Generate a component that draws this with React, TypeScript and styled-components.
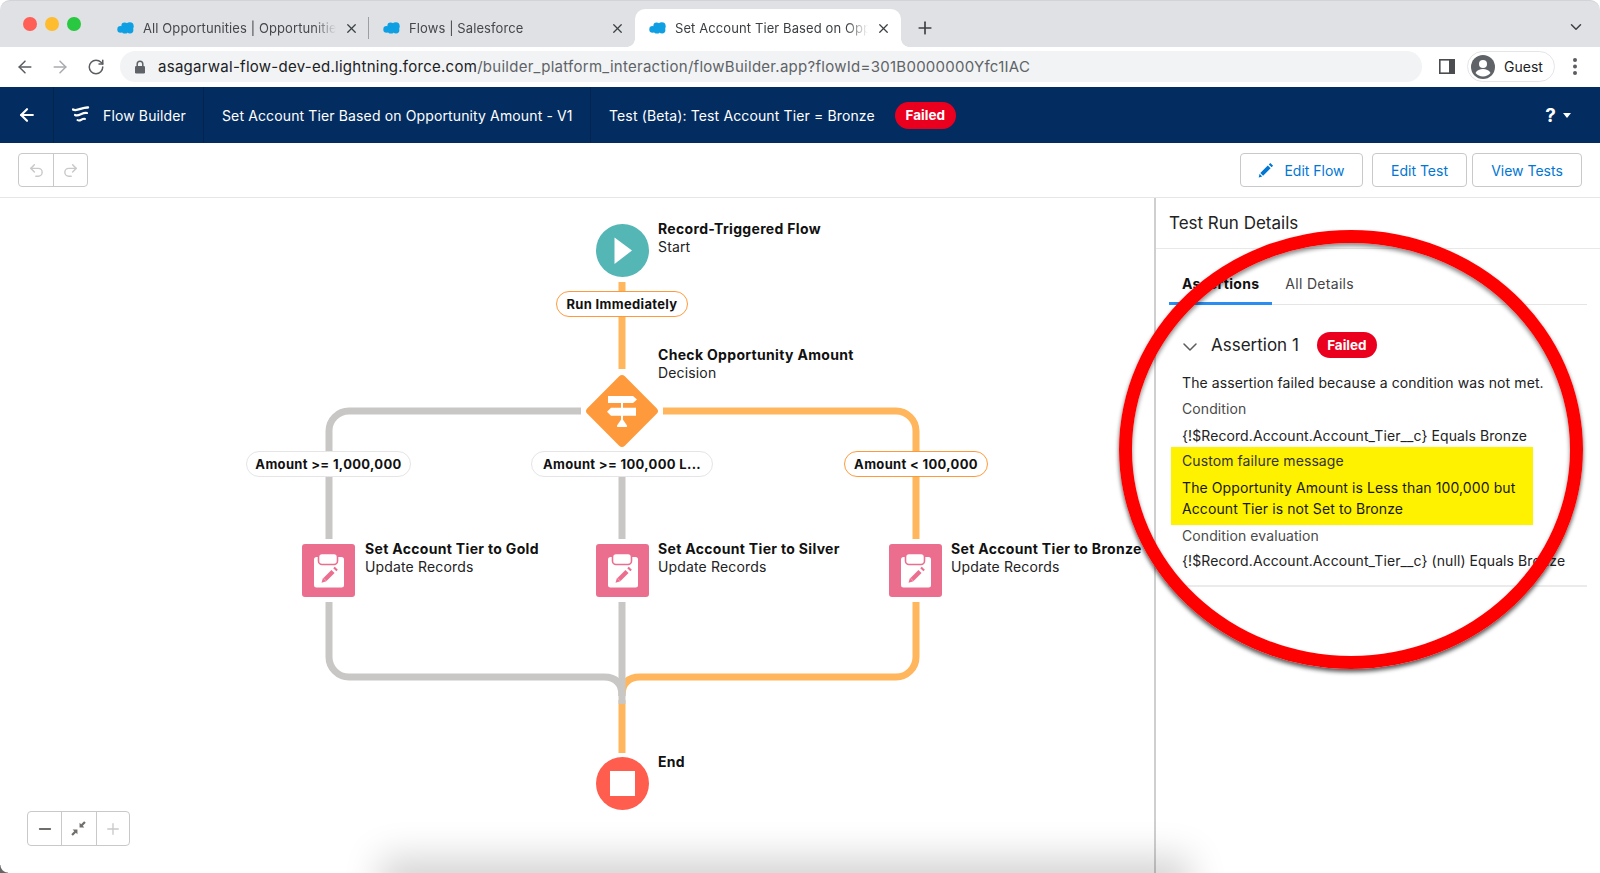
import React from "react";
import styled, { createGlobalStyle } from "styled-components";
import { ArrowLeft, ArrowRight, RotateCw, X, Plus, ChevronDown, Undo2, Redo2, Minus } from "lucide-react";

const CANVAS_TOP = 198;
const ORANGE = "#FFB65C";
const GRAY = "#C9C7C5";
const FONT = `Inter, "Liberation Sans", sans-serif`;

const Global = createGlobalStyle`
  html, body { margin: 0; padding: 0; background: #fff; }
  body { font-family: ${FONT}; color: #181818; overflow: hidden; }
  * { box-sizing: border-box; }
`;

const Window = styled.div`
  position: relative;
  width: 1600px;
  height: 873px;
  overflow: hidden;
  display: flex;
  flex-direction: column;
  background: #fff;
`;

/* ---------- browser tab strip ---------- */
const TabStrip = styled.div`
  height: 47px;
  flex: none;
  display: flex;
  align-items: flex-end;
  padding-left: 23px;
  background: #dfe1e5;
  border-radius: 10px 10px 0 0;
  border-top: 1px solid #d2d3d6;
`;
const Lights = styled.div`
  width: 80px;
  align-self: flex-start;
  display: flex;
  gap: 8.5px;
  padding-top: 16px;
`;
const Light = styled.span<{ $c: string }>`
  width: 13.5px;
  height: 14px;
  border-radius: 50%;
  background: ${(p) => p.$c};
`;
const Tab = styled.div<{ $active?: boolean; $sep?: boolean }>`
  position: relative;
  width: 266px;
  height: 38px;
  display: flex;
  align-items: center;
  padding: 0 0 0 14px;
  gap: 8px;
  color: ${(p) => (p.$active ? "#3c4043" : "#45474a")};
  background: ${(p) => (p.$active ? "#fff" : "transparent")};
  border-radius: 10px 10px 0 0;
  &::before {
    content: "";
    display: ${(p) => (p.$active ? "block" : "none")};
    position: absolute;
    left: -8px;
    bottom: 0;
    width: 8px;
    height: 8px;
    background: radial-gradient(circle at 0 0, #dfe1e5 7.5px, #fff 8px);
  }
  &::after {
    content: "";
    display: ${(p) => (p.$sep || p.$active ? "block" : "none")};
    position: absolute;
    ${(p) =>
      p.$active
        ? `right: -8px; bottom: 0; width: 8px; height: 8px;
           background: radial-gradient(circle at 100% 0, #dfe1e5 7.5px, #fff 8px);`
        : `right: 0; top: 8px; height: 22px; width: 1px; background: #9c9ea1;`}
  }
`;
const TabTitle = styled.span`
  width: 193px;
  margin-left: 1px;
  font-size: 13px;
  letter-spacing: 0.1px;
  white-space: nowrap;
  line-height: 20px;
  mask-image: linear-gradient(to right, #000 calc(100% - 22px), transparent);
`;
const TabClose = styled(X)`
  width: 15px;
  height: 15px;
  stroke-width: 2;
  color: #3c4043;
`;
const NewTab = styled(Plus)`
  width: 20px;
  height: 20px;
  margin: 0 0 9px 14px;
  color: #3c4043;
  stroke-width: 2;
`;
const StripChevron = styled(ChevronDown)`
  margin: 0 15px 11px auto;
  width: 18px;
  height: 18px;
  color: #3c4043;
`;

/* ---------- browser address bar ---------- */
const NavBar = styled.div`
  height: 40px;
  flex: none;
  display: flex;
  align-items: center;
  background: #fff;
  padding: 4px 0 5px 14px;
`;
const NavIcon = styled.span<{ $muted?: boolean }>`
  width: 21px;
  margin-right: 14.5px;
  display: flex;
  justify-content: center;
  color: ${(p) => (p.$muted ? "#a9abaf" : "#5a5d61")};
`;
const Omnibox = styled.div`
  width: 1302px;
  height: 31px;
  margin-left: -0.5px;
  border-radius: 16px;
  background: #f1f3f4;
  display: flex;
  align-items: center;
  padding-left: 14px;
  font-size: 15px;
  letter-spacing: 0.27px;
  color: #202124;
  white-space: nowrap;
`;
const LockIcon = styled.svg`
  width: 12px;
  height: 14px;
  margin-right: 12px;
`;
const Path = styled.span`
  color: #5f6368;
`;
const SideBtn = styled.svg`
  width: 16px;
  height: 15px;
  margin-left: 17px;
`;
const GuestPill = styled.div`
  width: 88px;
  height: 31px;
  margin-left: 12px;
  border: 1px solid #e4e5e8;
  border-radius: 16px;
  display: flex;
  align-items: center;
  padding-left: 3px;
  gap: 9px;
  font-size: 14px;
  color: #202124;
`;
const Kebab = styled.svg`
  width: 4px;
  height: 17px;
  margin-left: 18px;
`;

/* ---------- flow builder header ---------- */
const AppHeader = styled.header`
  height: 56px;
  flex: none;
  display: flex;
  align-items: stretch;
  background: #032d60;
  color: #fff;
  font-size: 14px;
  letter-spacing: 0.13px;
`;
const HeaderCell = styled.div<{ $w?: number; $pad?: number }>`
  ${(p) => (p.$w ? `width: ${p.$w}px;` : "")}
  padding: 0 ${(p) => p.$pad ?? 0}px;
  display: flex;
  align-items: center;
  border-right: 1px solid #02244d;
  white-space: nowrap;
`;
const TestCell = styled.div`
  display: flex;
  align-items: center;
  padding-left: 18px;
  gap: 20px;
`;
const BackArrow = styled(ArrowLeft)`
  width: 20px;
  height: 20px;
  margin-left: 17px;
  stroke-width: 2.6;
`;
const FlowMark = styled.svg`
  width: 18px;
  height: 18px;
  margin: 0 13px 0 18px;
`;
const Badge = styled.span<{ $big?: boolean }>`
  height: ${(p) => (p.$big ? 27 : 26)}px;
  width: ${(p) => (p.$big ? 61 : 60)}px;
  border-radius: 14px;
  background: #ea001e;
  color: #fff;
  font-size: 13.5px;
  font-weight: 700;
  letter-spacing: 0;
  display: flex;
  align-items: center;
  justify-content: center;
`;
const HelpMenu = styled.div`
  margin-left: auto;
  margin-right: 29px;
  display: flex;
  align-items: center;
  gap: 7px;
  font-size: 19px;
  font-weight: 700;
`;
const Caret = styled.span`
  width: 0;
  height: 0;
  border-left: 4px solid transparent;
  border-right: 4px solid transparent;
  border-top: 5px solid #fff;
`;

/* ---------- flow builder toolbar ---------- */
const ActionBar = styled.div`
  height: 55px;
  flex: none;
  display: flex;
  justify-content: space-between;
  padding: 10px 18px 0;
  border-bottom: 1px solid #e6e6e6;
`;
const BtnGroup = styled.div`
  display: flex;
  height: 34px;
  border: 1px solid #c9c9c9;
  border-radius: 4px;
`;
const GroupBtn = styled.span<{ $w: number; $fg?: string }>`
  width: ${(p) => p.$w}px;
  display: flex;
  align-items: center;
  justify-content: center;
  color: ${(p) => p.$fg ?? "#c9c9c9"};
  & + & {
    border-left: 1px solid #c9c9c9;
  }
`;
const Actions = styled.div`
  display: flex;
`;
const ActionBtn = styled.span<{ $w: number; $mr?: number }>`
  width: ${(p) => p.$w}px;
  height: 34px;
  margin-right: ${(p) => p.$mr ?? 0}px;
  display: flex;
  align-items: center;
  justify-content: center;
  gap: 10px;
  border: 1px solid #c9c9c9;
  border-radius: 4px;
  color: #0176d3;
  font-size: 14px;
`;

/* ---------- workspace ---------- */
const Workspace = styled.div`
  flex: 1;
  min-height: 0;
  display: flex;
`;
const Canvas = styled.main`
  position: relative;
  flex: 1;
  min-width: 0;
`;
const Wires = styled.svg`
  position: absolute;
  inset: 0;
  width: 1155px;
  height: 675px;
`;
const Wire = styled.path<{ $c: string }>`
  fill: none;
  stroke: ${(p) => p.$c};
  stroke-width: 7;
`;
const NodeIcon = styled.div<{ $x: number; $y: number; $s?: number }>`
  position: absolute;
  left: ${(p) => p.$x}px;
  top: ${(p) => p.$y - CANVAS_TOP}px;
  width: ${(p) => p.$s ?? 53}px;
  height: ${(p) => p.$s ?? 53}px;
  svg {
    display: block;
  }
`;
const NodeLabel = styled.div<{ $x: number; $y: number }>`
  position: absolute;
  left: ${(p) => p.$x}px;
  top: ${(p) => p.$y - CANVAS_TOP}px;
  font-size: 14px;
  line-height: 18px;
  letter-spacing: 0.15px;
  white-space: nowrap;
  color: #222;
`;
const NodeName = styled.div`
  font-weight: 700;
  letter-spacing: 0.32px;
  color: #111;
`;
const Pill = styled.div<{ $x: number; $y: number; $w: number; $hot?: boolean }>`
  position: absolute;
  left: ${(p) => p.$x}px;
  top: ${(p) => p.$y - CANVAS_TOP}px;
  width: ${(p) => p.$w}px;
  height: 26px;
  background: #fff;
  border: 1px solid ${(p) => (p.$hot ? "#FF9A3C" : "#e5e5e5")};
  border-radius: 13px;
  display: flex;
  align-items: center;
  justify-content: center;
  font-size: 13px;
  font-weight: 700;
  letter-spacing: 0.33px;
  color: #111;
  white-space: nowrap;
`;
const ZoomBar = styled(BtnGroup)`
  position: absolute;
  left: 27px;
  bottom: 27px;
  height: 35px;
  width: 103px;
`;

/* ---------- right panel ---------- */
const Panel = styled.aside`
  width: 446px;
  flex: none;
  border-left: 2px solid #cfcfcf;
`;
const PanelHead = styled.div`
  height: 51px;
  padding: 15px 0 0 13px;
  border-bottom: 1px solid #e8e8e8;
  font-size: 17px;
  line-height: 20px;
  color: #222;
`;
const PanelTabs = styled.div`
  margin: 20px 13px 0 13px;
  height: 36px;
  display: flex;
  border-bottom: 1px solid #e5e5e5;
`;
const PanelTab = styled.div<{ $on?: boolean }>`
  height: 36px;
  padding: 0 13px;
  line-height: 30px;
  font-size: 14px;
  letter-spacing: 0.3px;
  font-weight: ${(p) => (p.$on ? 700 : 400)};
  color: ${(p) => (p.$on ? "#111" : "#444")};
  border-bottom: 3px solid ${(p) => (p.$on ? "#2b8df0" : "transparent")};
`;
const Section = styled.section`
  margin: 27px 13px 0 12px;
  padding-bottom: 10px;
  border-bottom: 2px solid #ebebeb;
`;
const SectionHead = styled.div`
  height: 26px;
  display: flex;
  align-items: center;
  padding-left: 12px;
`;
const Chevron = styled(ChevronDown)`
  width: 24px;
  height: 24px;
  stroke-width: 1.5;
  color: #5c5c5c;
  margin: 4px 0 0 -2px;
`;
const SectionTitle = styled.span`
  margin: 0 18px 0 9px;
  font-size: 17px;
  color: #222;
`;
const Line = styled.div<{ $muted?: boolean; $h?: number }>`
  padding-left: 14px;
  font-size: 14px;
  letter-spacing: 0.09px;
  line-height: ${(p) => p.$h ?? 26}px;
  white-space: nowrap;
  color: ${(p) => (p.$muted ? "#4a4a4a" : "#222")};
`;
const Body = styled.div`
  margin-top: 12px;
`;
const Highlight = styled.div`
  width: 362px;
  margin: -2px 0 0 3px;
  padding: 1px 0 4px;
  background: #fff200;
`;
const HighlightLine = styled(Line)`
  padding-left: 11px;
  color: #333;
`;
const Message = styled.div`
  padding: 2.5px 11px;
  font-size: 14px;
  letter-spacing: 0.1px;
  line-height: 21px;
  color: #181818;
`;

/* ---------- overlays ---------- */
const Ring = styled.div`
  position: absolute;
  left: 1119px;
  top: 230px;
  width: 464px;
  height: 439px;
  border: 13px solid #fe0000;
  border-radius: 50%;
  box-shadow: 0 3px 4px rgba(0, 0, 0, 0.65), inset 0 3px 4px rgba(0, 0, 0, 0.45);
  pointer-events: none;
`;
const BottomShade = styled.div`
  position: absolute;
  left: 400px;
  bottom: -34px;
  width: 770px;
  height: 30px;
  box-shadow: 0 0 36px 20px rgba(0, 0, 0, 0.17);
  pointer-events: none;
`;
const Corner = styled.div`
  position: absolute;
  left: 0;
  bottom: 0;
  width: 8px;
  height: 8px;
  background: radial-gradient(circle at 100% 0, transparent 7px, #666 8px);
`;

/* ---------- drawings ---------- */
const Cloud = () => (
  <svg width="17" height="12" viewBox="0 0 17 12" fill="#0F9FE3">
    <circle cx="3.6" cy="7.4" r="3.3" />
    <circle cx="7.6" cy="3.6" r="3.2" />
    <circle cx="12.8" cy="4.2" r="3.9" />
    <circle cx="13" cy="8" r="3.4" />
    <circle cx="8" cy="8.2" r="3.4" />
  </svg>
);
const FlowLogo = () => (
  <FlowMark viewBox="0 0 18 18" fill="none" stroke="#fff" strokeLinecap="round">
    <path d="M1 3.5C5 6 10 1 16 1.5" strokeWidth="2.4" />
    <path d="M3 9C7 11 10 6 15 7" strokeWidth="2.2" />
    <path d="M5.5 14C8 16 10 12 13 13" strokeWidth="2" />
  </FlowMark>
);
const Clipboard = () => (
  <svg width="53" height="53" viewBox="0 0 53 53">
    <rect width="53" height="53" rx="3" fill="#EC6E8F" />
    <rect x="12" y="13" width="30" height="30.5" rx="2.5" fill="#fff" />
    <rect x="16.5" y="9.5" width="19" height="11" rx="3.5" fill="#fff" stroke="#EC6E8F" strokeWidth="1.6" />
    <path d="M23 35.5L31 27.5M32.8 25.7L34.3 24.2" stroke="#EC6E8F" strokeWidth="4.4" fill="none" />
    <path d="M19.5 38.8l1.5-5 3.5 3.5z" fill="#EC6E8F" />
  </svg>
);
const Decision = () => (
  <svg width="74" height="74" viewBox="0 0 74 74">
    <rect x="10.5" y="10.5" width="53" height="53" rx="4" fill="#FF9A3C" transform="rotate(45 37 37)" />
    <path
      d="M23 22H48L52 25.5L48 29H38V33.7H51V41.7H38V45.8L42 51.5Q42.5 53 41 53H33Q31.5 53 32 51.5L36 45.8V41.7H26L22 37.7L26 33.7H36V29H23Z"
      fill="#fff"
    />
  </svg>
);
const PencilGlyph = () => (
  <svg width="16" height="16" viewBox="0 0 16 16" fill="#0176d3">
    <path d="M12.3.9l2.8 2.8-1.5 1.5-2.8-2.8zM9.8 3.4l2.8 2.8-7.5 7.5-2.8-2.8zM1.600 11.8l2.6 2.6-3.5 1z" />
  </svg>
);
const Compress = () => (
  <svg width="17" height="17" viewBox="0 0 16 16" fill="#706e6b">
    <path d="M9 7V2.5l1.5 1.5L13.3 1.2l1.5 1.5L12 5.5 13.5 7zM7 9v4.5L5.5 12l-2.8 2.8-1.5-1.5L4 10.5 2.5 9z" />
  </svg>
);

const updates = [
  { x: 302, lx: 365, name: "Set Account Tier to Gold" },
  { x: 595.5, lx: 658, name: "Set Account Tier to Silver" },
  { x: 889, lx: 951, name: "Set Account Tier to Bronze" },
];

export default function App() {
  return (
    <Window>
      <Global />
      <TabStrip>
        <Lights>
          <Light $c="#FF5F57" />
          <Light $c="#FEBC2E" />
          <Light $c="#28C840" />
        </Lights>
        <Tab $sep>
          <Cloud />
          <TabTitle>All Opportunities | Opportunitie</TabTitle>
          <TabClose />
        </Tab>
        <Tab>
          <Cloud />
          <TabTitle>Flows | Salesforce</TabTitle>
          <TabClose />
        </Tab>
        <Tab $active>
          <Cloud />
          <TabTitle>Set Account Tier Based on Opp</TabTitle>
          <TabClose />
        </Tab>
        <NewTab />
        <StripChevron />
      </TabStrip>

      <NavBar>
        <NavIcon>
          <ArrowLeft size={20} strokeWidth={1.8} />
        </NavIcon>
        <NavIcon $muted>
          <ArrowRight size={20} strokeWidth={1.8} />
        </NavIcon>
        <NavIcon>
          <RotateCw size={18} strokeWidth={2} />
        </NavIcon>
        <Omnibox>
          <LockIcon viewBox="0 0 12 14" fill="#5f6368">
            <rect x="1" y="6" width="10" height="7.5" rx="1.2" />
            <path d="M3.2 6V4a2.8 2.8 0 015.6 0v2" fill="none" stroke="#5f6368" strokeWidth="1.5" />
          </LockIcon>
          <span>
            asagarwal-flow-dev-ed.lightning.force.com
            <Path>/builder_platform_interaction/flowBuilder.app?flowId=301B0000000Yfc1IAC</Path>
          </span>
        </Omnibox>
        <SideBtn viewBox="0 0 16 15">
          <rect x="0.8" y="0.8" width="14.4" height="13.4" fill="#fff" stroke="#4a4c50" strokeWidth="1.6" />
          <rect x="10" y="1" width="5" height="13" fill="#4a4c50" />
        </SideBtn>
        <GuestPill>
          <svg width="24" height="24" viewBox="0 0 24 24">
            <circle cx="12" cy="12" r="12" fill="#5f6368" />
            <circle cx="12" cy="9" r="4" fill="#fff" />
            <path d="M4.5 18c1.5-3 4.5-4 7.5-4s6 1 7.5 4a9.8 9.8 0 01-15 0z" fill="#fff" />
          </svg>
          Guest
        </GuestPill>
        <Kebab viewBox="0 0 4 17" fill="#5a5d61">
          <circle cx="2" cy="2" r="2" />
          <circle cx="2" cy="8.5" r="2" />
          <circle cx="2" cy="15" r="2" />
        </Kebab>
      </NavBar>

      <AppHeader>
        <HeaderCell $w={54}>
          <BackArrow />
        </HeaderCell>
        <HeaderCell $w={150}>
          <FlowLogo />
          Flow Builder
        </HeaderCell>
        <HeaderCell $w={387} $pad={18}>
          Set Account Tier Based on Opportunity Amount - V1
        </HeaderCell>
        <TestCell>
          Test (Beta): Test Account Tier = Bronze
          <Badge $big>Failed</Badge>
        </TestCell>
        <HelpMenu>
          ?
          <Caret />
        </HelpMenu>
      </AppHeader>

      <ActionBar>
        <BtnGroup>
          <GroupBtn $w={34}>
            <Undo2 size={17} strokeWidth={2} />
          </GroupBtn>
          <GroupBtn $w={34}>
            <Redo2 size={17} strokeWidth={2} />
          </GroupBtn>
        </BtnGroup>
        <Actions>
          <ActionBtn $w={123} $mr={9}>
            <PencilGlyph />
            Edit Flow
          </ActionBtn>
          <ActionBtn $w={95} $mr={5}>
            Edit Test
          </ActionBtn>
          <ActionBtn $w={110}>View Tests</ActionBtn>
        </Actions>
      </ActionBar>

      <Workspace>
        <Canvas>
          <Wires viewBox={`0 ${CANVAS_TOP} 1155 675`}>
            <Wire $c={ORANGE} d="M622 282V369" />
            <Wire $c={ORANGE} d="M663 411H896A20 20 0 0 1 916 431V539M916 602V657A20 20 0 0 1 896 677H640Q622 677 622 696" />
            <Wire $c={ORANGE} d="M622 700V753" />
            <Wire $c={GRAY} d="M581 411H349A20 20 0 0 0 329 431V539M329 602V657A20 20 0 0 0 349 677H604Q622 677 622 696" />
            <Wire $c={GRAY} d="M622 477V539M622 602V704" />
          </Wires>

          <NodeIcon $x={595.5} $y={224}>
            <svg width="53" height="53" viewBox="0 0 53 53">
              <circle cx="26.5" cy="26.5" r="26.5" fill="#54B6B5" />
              <path d="M18.5 13.5L36 26.5 18.5 40z" fill="#fff" />
            </svg>
          </NodeIcon>
          <NodeLabel $x={658} $y={220}>
            <NodeName>Record-Triggered Flow</NodeName>
            Start
          </NodeLabel>
          <Pill $hot $x={556} $y={291} $w={132}>
            Run Immediately
          </Pill>

          <NodeIcon $x={585} $y={374} $s={74}>
            <Decision />
          </NodeIcon>
          <NodeLabel $x={658} $y={346}>
            <NodeName>Check Opportunity Amount</NodeName>
            Decision
          </NodeLabel>

          <Pill $x={246} $y={451} $w={165}>
            Amount &gt;= 1,000,000
          </Pill>
          <Pill $x={531} $y={451} $w={182}>
            Amount &gt;= 100,000 L...
          </Pill>
          <Pill $hot $x={844} $y={451} $w={144}>
            Amount &lt; 100,000
          </Pill>

          {updates.map((u) => (
            <React.Fragment key={u.name}>
              <NodeIcon $x={u.x} $y={544}>
                <Clipboard />
              </NodeIcon>
              <NodeLabel $x={u.lx} $y={540}>
                <NodeName>{u.name}</NodeName>
                Update Records
              </NodeLabel>
            </React.Fragment>
          ))}

          <NodeIcon $x={595.5} $y={757}>
            <svg width="53" height="53" viewBox="0 0 53 53">
              <circle cx="26.5" cy="26.5" r="26.5" fill="#FF5D4D" />
              <rect x="14" y="14" width="25" height="25" fill="#fff" />
            </svg>
          </NodeIcon>
          <NodeLabel $x={658} $y={753}>
            <NodeName>End</NodeName>
          </NodeLabel>

          <ZoomBar>
            <GroupBtn $w={34} $fg="#706e6b">
              <Minus size={18} strokeWidth={2.4} />
            </GroupBtn>
            <GroupBtn $w={35} $fg="#706e6b">
              <Compress />
            </GroupBtn>
            <GroupBtn $w={34}>
              <Plus size={18} strokeWidth={1.8} />
            </GroupBtn>
          </ZoomBar>
        </Canvas>

        <Panel>
          <PanelHead>Test Run Details</PanelHead>
          <PanelTabs>
            <PanelTab $on>Assertions</PanelTab>
            <PanelTab>All Details</PanelTab>
          </PanelTabs>
          <Section>
            <SectionHead>
              <Chevron />
              <SectionTitle>Assertion 1</SectionTitle>
              <Badge>Failed</Badge>
            </SectionHead>
            <Body>
              <Line>The assertion failed because a condition was not met.</Line>
              <Line $muted>Condition</Line>
              <Line $h={27}>{"{!$Record.Account.Account_Tier__c} Equals Bronze"}</Line>
              <Highlight>
                <HighlightLine>Custom failure message</HighlightLine>
                <Message>
                  The Opportunity Amount is Less than 100,000 but
                  <br />
                  Account Tier is not Set to Bronze
                </Message>
              </Highlight>
              <Line $muted $h={22}>
                Condition evaluation
              </Line>
              <Line $h={28}>{"{!$Record.Account.Account_Tier__c} (null) Equals Bronze"}</Line>
            </Body>
          </Section>
        </Panel>
      </Workspace>

      <BottomShade />
      <Ring />
      <Corner />
    </Window>
  );
}
